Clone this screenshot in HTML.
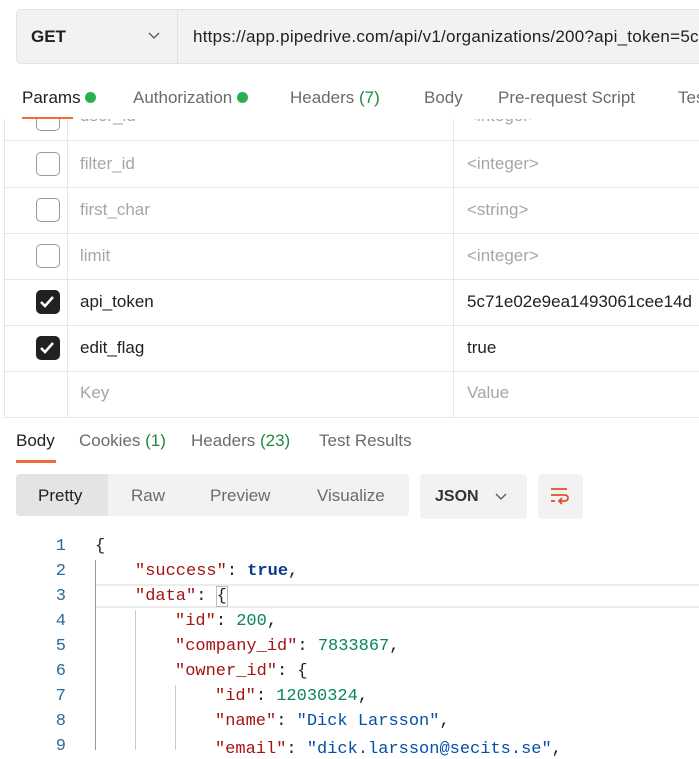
<!DOCTYPE html>
<html><head><style>
*{margin:0;padding:0;box-sizing:border-box}
body{width:699px;height:750px;overflow:hidden;background:#fff;font-family:"Liberation Sans",sans-serif;position:relative;color:#212121}
.a{position:absolute;white-space:nowrap}
.hl{position:absolute;left:4px;width:695px;height:1px;background:#e6e6e6}
.vl{position:absolute;width:1px;background:#e6e6e6}
.cb{position:absolute;left:36px;width:24px;height:24px;border:1.5px solid #9a9a9a;border-radius:5px;background:#fff}
.ck{background:#212121;border-color:#212121}
.t{font-size:17px;color:#a6a6a6}
.d{font-size:17px;color:#212121}
.code{font-family:"Liberation Mono",monospace;font-size:17px}
.n{position:absolute;left:40px;width:26px;text-align:right;color:#2a6b9a;font-family:"Liberation Mono",monospace;font-size:17px}
.k{color:#a31515}.s{color:#0451a5}.g{color:#098658}.b{font-weight:bold;color:#0d3a8a}
</style></head><body>
<div class="a" style="left:16px;top:9px;width:700px;height:55px;background:#f2f2f2;border:1px solid #e2e2e2;border-radius:5px"></div>
<div class="a" style="left:177px;top:10px;width:1px;height:53px;background:#e0e0e0"></div>
<div class="a" style="left:31px;top:27px;font-size:17px;font-weight:bold">GET</div>
<svg class="a" style="left:148px;top:32px" width="12" height="8"><path d="M1 1l5 5 5-5" fill="none" stroke="#555" stroke-width="1.3"/></svg>
<div class="a" style="left:193px;top:27px;font-size:17px;letter-spacing:0.25px">https://app.pipedrive.com/api/v1/organizations/200?api_token=5c</div>

<div class="a" style="left:22px;top:88px;font-size:17px">Params <span style="display:inline-block;width:11px;height:11px;border-radius:50%;background:#26b050"></span></div>
<div class="a" style="left:22px;top:117px;width:51px;height:2px;background:#f26b3a"></div>
<div class="a" style="left:133px;top:88px;font-size:17px;color:#6b6b6b">Authorization <span style="display:inline-block;width:11px;height:11px;border-radius:50%;background:#26b050"></span></div>
<div class="a" style="left:290px;top:88px;font-size:17px;color:#6b6b6b">Headers <span style="color:#1f8a3a">(7)</span></div>
<div class="a" style="left:424px;top:88px;font-size:17px;color:#6b6b6b">Body</div>
<div class="a" style="left:498px;top:88px;font-size:17px;color:#6b6b6b">Pre-request Script</div>
<div class="a" style="left:678px;top:88px;font-size:17px;color:#6b6b6b">Tests</div>

<div class="a" style="left:0;top:119px;width:699px;height:299px;overflow:hidden">
<div class="vl" style="left:4px;top:0;height:299px"></div>
<div class="vl" style="left:67px;top:0;height:299px"></div>
<div class="vl" style="left:453px;top:0;height:299px"></div>
<div class="cb" style="top:-12px"></div>
<div class="a t" style="left:80px;top:-13px">user_id</div>
<div class="a t" style="left:467px;top:-13px">&lt;integer&gt;</div>
</div>
<div class="hl" style="top:140px"></div>
<div class="hl" style="top:187px"></div>
<div class="hl" style="top:233px"></div>
<div class="hl" style="top:279px"></div>
<div class="hl" style="top:325px"></div>
<div class="hl" style="top:371px"></div>
<div class="hl" style="top:417px"></div>
<div class="cb" style="top:152px"></div><div class="a t" style="left:80px;top:154px">filter_id</div><div class="a t" style="left:467px;top:154px">&lt;integer&gt;</div>
<div class="cb" style="top:198px"></div><div class="a t" style="left:80px;top:200px">first_char</div><div class="a t" style="left:467px;top:200px">&lt;string&gt;</div>
<div class="cb" style="top:244px"></div><div class="a t" style="left:80px;top:246px">limit</div><div class="a t" style="left:467px;top:246px">&lt;integer&gt;</div>
<div class="cb ck" style="top:290px"><svg width="21" height="21" style="position:absolute;left:0;top:0"><path d="M4 11l4 4 8-9" fill="none" stroke="#fff" stroke-width="2.5"/></svg></div>
<div class="a d" style="left:80px;top:292px">api_token</div><div class="a d" style="left:467px;top:292px">5c71e02e9ea1493061cee14d</div>
<div class="cb ck" style="top:336px"><svg width="21" height="21" style="position:absolute;left:0;top:0"><path d="M4 11l4 4 8-9" fill="none" stroke="#fff" stroke-width="2.5"/></svg></div>
<div class="a d" style="left:80px;top:338px">edit_flag</div><div class="a d" style="left:467px;top:338px">true</div>
<div class="a t" style="left:80px;top:383px">Key</div><div class="a t" style="left:467px;top:383px">Value</div>

<div class="a" style="left:16px;top:431px;font-size:17px">Body</div>
<div class="a" style="left:16px;top:460px;width:40px;height:3px;background:#f26b3a"></div>
<div class="a" style="left:79px;top:431px;font-size:17px;color:#6b6b6b">Cookies <span style="color:#1f8a3a">(1)</span></div>
<div class="a" style="left:191px;top:431px;font-size:17px;color:#6b6b6b">Headers <span style="color:#1f8a3a">(23)</span></div>
<div class="a" style="left:319px;top:431px;font-size:17px;color:#6b6b6b">Test Results</div>

<div class="a" style="left:16px;top:474px;width:393px;height:42px;background:#f2f2f2;border-radius:4px"></div>
<div class="a" style="left:16px;top:474px;width:92px;height:42px;background:#e4e4e4;border-radius:4px 0 0 4px"></div>
<div class="a" style="left:38px;top:486px;font-size:17px">Pretty</div>
<div class="a" style="left:131px;top:486px;font-size:17px;color:#6b6b6b">Raw</div>
<div class="a" style="left:210px;top:486px;font-size:17px;color:#6b6b6b">Preview</div>
<div class="a" style="left:317px;top:486px;font-size:17px;color:#6b6b6b">Visualize</div>
<div class="a" style="left:420px;top:474px;width:107px;height:45px;background:#f2f2f2;border-radius:4px"></div>
<div class="a" style="left:435px;top:488px;font-size:16px;font-weight:bold;color:#333">JSON</div>
<svg class="a" style="left:495px;top:493px" width="12" height="8"><path d="M1 1l5 5 5-5" fill="none" stroke="#555" stroke-width="1.3"/></svg>
<div class="a" style="left:538px;top:474px;width:45px;height:45px;background:#f2f2f2;border-radius:4px"></div>
<svg class="a" style="left:549px;top:486px" width="22" height="22"><path d="M2 3h16M2 9h14a3 3 0 0 1 0 6h-6M13 12l-3 3 3 3M2 15h4" fill="none" stroke="#e0502a" stroke-width="1.8"/></svg>

<div class="n" style="top:537px">1</div><div class="n" style="top:562px">2</div><div class="n" style="top:587px">3</div><div class="n" style="top:612px">4</div><div class="n" style="top:637px">5</div><div class="n" style="top:662px">6</div><div class="n" style="top:687px">7</div><div class="n" style="top:712px">8</div><div class="n" style="top:737px">9</div>
<div class="a" style="left:96px;top:584px;width:603px;height:24px;border-top:2px solid #ececec;border-bottom:2px solid #ececec"></div>
<div class="a" style="left:95px;top:560px;width:1px;height:190px;background:#999"></div>
<div class="a" style="left:135px;top:610px;width:1px;height:140px;background:#ccc"></div>
<div class="a" style="left:175px;top:685px;width:1px;height:65px;background:#ccc"></div>
<div class="a code" style="left:95px;top:537px">{</div>
<div class="a code" style="left:135px;top:562px"><span class="k">"success"</span>: <span class="b">true</span>,</div>
<div class="a code" style="left:135px;top:587px"><span class="k">"data"</span>: <span style="outline:1px solid #bbb">{</span></div>
<div class="a code" style="left:175px;top:612px"><span class="k">"id"</span>: <span class="g">200</span>,</div>
<div class="a code" style="left:175px;top:637px"><span class="k">"company_id"</span>: <span class="g">7833867</span>,</div>
<div class="a code" style="left:175px;top:662px"><span class="k">"owner_id"</span>: {</div>
<div class="a code" style="left:215px;top:687px"><span class="k">"id"</span>: <span class="g">12030324</span>,</div>
<div class="a code" style="left:215px;top:712px"><span class="k">"name"</span>: <span class="s">"Dick Larsson"</span>,</div>
<div class="a code" style="left:215px;top:740px"><span class="k">"email"</span>: <span class="s">"dick.larsson@secits.se"</span>,</div>
</body></html>
